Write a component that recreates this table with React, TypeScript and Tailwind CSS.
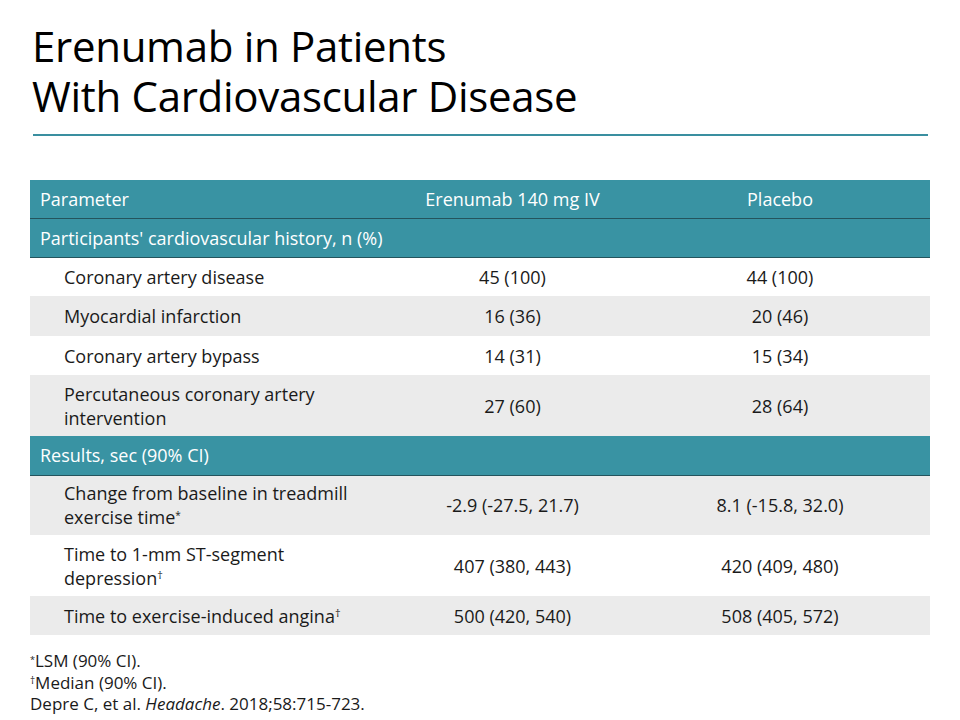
import * as React from 'react';

type Row = {
  kind: 'section' | 'data';
  label: React.ReactNode;
  a?: string;
  b?: string;
  shade?: boolean;
  h: string;
};

const rows: Row[] = [
  { kind: 'section', label: "Participants' cardiovascular history, n (%)", h: 'h-[39px]' },
  { kind: 'data', label: 'Coronary artery disease', a: '45 (100)', b: '44 (100)', h: 'h-[39px]' },
  { kind: 'data', label: 'Myocardial infarction', a: '16 (36)', b: '20 (46)', shade: true, h: 'h-[40px]' },
  { kind: 'data', label: 'Coronary artery bypass', a: '14 (31)', b: '15 (34)', h: 'h-[39px]' },
  {
    kind: 'data',
    label: (
      <>
        Percutaneous coronary artery
        <br />
        intervention
      </>
    ),
    a: '27 (60)',
    b: '28 (64)',
    shade: true,
    h: 'h-[61px]',
  },
  { kind: 'section', label: 'Results, sec (90% CI)', h: 'h-[39px]' },
  {
    kind: 'data',
    label: (
      <>
        Change from baseline in treadmill
        <br />
        exercise time<sup className="text-[10px]">*</sup>
      </>
    ),
    a: '-2.9 (-27.5, 21.7)',
    b: '8.1 (-15.8, 32.0)',
    shade: true,
    h: 'h-[60px]',
  },
  {
    kind: 'data',
    label: (
      <>
        Time to 1-mm ST-segment
        <br />
        depression<sup className="text-[11px]">†</sup>
      </>
    ),
    a: '407 (380, 443)',
    b: '420 (409, 480)',
    h: 'h-[61px]',
  },
  {
    kind: 'data',
    label: (
      <>
        Time to exercise-induced angina<sup className="text-[11px]">†</sup>
      </>
    ),
    a: '500 (420, 540)',
    b: '508 (405, 572)',
    shade: true,
    h: 'h-[39px]',
  },
];

const App: React.FC = () => {
  return (
    <div className="w-[960px] h-[720px] bg-white overflow-hidden font-['Open_Sans',sans-serif] text-[#1a1a1a]">
      {/* Title */}
      <div className="pt-[21px] pl-[32px]">
        <h1 className="text-[42px] leading-[50px] text-black tracking-[-0.3px]">
          Erenumab in Patients
          <br />
          With Cardiovascular Disease
        </h1>
      </div>
      <div className="mt-[13px] ml-[33px] w-[895px] h-[2px] bg-[#3a8fa0]" />

      {/* Table */}
      <table className="mt-[44px] ml-[30px] w-[900px] border-collapse text-[18px] leading-[24px]">
        <colgroup>
          <col className="w-[365px]" />
          <col className="w-[235px]" />
          <col className="w-[300px]" />
        </colgroup>
        <thead>
          <tr className="h-[38px] bg-[#3993a3] text-white border-b border-[#24545d]">
            <th className="text-left font-normal pl-[10px]">Parameter</th>
            <th className="font-normal text-center">Erenumab 140 mg IV</th>
            <th className="font-normal text-center">Placebo</th>
          </tr>
        </thead>
        <tbody>
          {rows.map((r, i) =>
            r.kind === 'section' ? (
              <tr key={i} className={`${r.h} bg-[#3993a3] text-white border-b border-[#24545d]`}>
                <td colSpan={3} className="pl-[10px]">
                  {r.label}
                </td>
              </tr>
            ) : (
              <tr key={i} className={`${r.h} ${r.shade ? 'bg-[#ebebeb]' : 'bg-white'}`}>
                <td className="pl-[34px]">{r.label}</td>
                <td className="text-center">{r.a}</td>
                <td className="text-center">{r.b}</td>
              </tr>
            )
          )}
        </tbody>
      </table>

      {/* Footnotes */}
      <div className="mt-[15px] ml-[30px] text-[17px] leading-[21.5px] text-[#1a1a1a]">
        <p>
          <sup className="text-[9px]">*</sup>LSM (90% CI).
        </p>
        <p>
          <sup className="text-[10px]">†</sup>Median (90% CI).
        </p>
        <p>
          Depre C, et al. <i>Headache</i>. 2018;58:715-723.
        </p>
      </div>
    </div>
  );
};

export default App;
